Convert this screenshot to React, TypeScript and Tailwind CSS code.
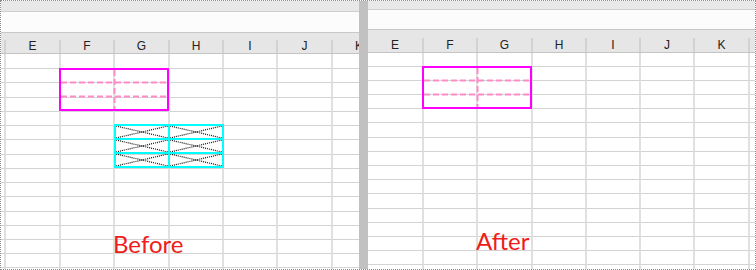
const LEFT_COLS = [
  { label: "", w: "w-[5px]" },
  { label: "E", w: "w-[55px]" },
  { label: "F", w: "w-[54px]" },
  { label: "G", w: "w-[55px]" },
  { label: "H", w: "w-[54px]" },
  { label: "I", w: "w-[54px]" },
  { label: "J", w: "w-[55px]" },
  { label: "K", w: "w-[54px]" },
];

const RIGHT_COLS = [
  { label: "E", w: "w-[56px]" },
  { label: "F", w: "w-[54px]" },
  { label: "G", w: "w-[55px]" },
  { label: "H", w: "w-[54px]" },
  { label: "I", w: "w-[54px]" },
  { label: "J", w: "w-[54px]" },
  { label: "K", w: "w-[55px]" },
  { label: "", w: "w-[54px]" },
];

// row heights incl. bottom grid line
const LEFT_ROWS = ["h-[15px]", "h-[14px]", "h-[15px]", "h-[14px]", "h-[14px]", "h-[14px]", "h-[15px]", "h-[14px]", "h-[14px]", "h-[14px]", "h-[15px]", "h-[14px]", "h-[14px]", "h-[14px]", "h-[14px]", "h-[14px]"];
const RIGHT_ROWS = ["h-[14px]", "h-[14px]", "h-[14px]", "h-[14px]", "h-[14px]", "h-[15px]", "h-[14px]", "h-[14px]", "h-[14px]", "h-[14px]", "h-[15px]", "h-[14px]", "h-[14px]", "h-[14px]", "h-[14px]", "h-[14px]"];

type Col = { label: string; w: string };

function Header({ cols, top, bottom }: { cols: Col[]; top: string; bottom: string }) {
  return (
    <div className="shrink-0 flex flex-col bg-[#e6e6e6] border-b border-[#c4c4c4]">
      <div className={top} />
      <div className={`flex ${bottom}`}>
        {cols.map((c, i) => (
          <div
            key={i}
            className={`${c.w} shrink-0 flex items-end justify-center pb-px border-r-2 border-[#d2d2d2] text-[12px] leading-none text-[#222]`}
          >
            {c.label}
          </div>
        ))}
      </div>
    </div>
  );
}

function Grid({ cols, rows }: { cols: Col[]; rows: string[] }) {
  return (
    <div className="flex flex-col">
      {rows.map((h, r) => (
        <div key={r} className={`flex shrink-0 ${h}`}>
          {cols.map((c, i) => (
            <div key={i} className={`${c.w} shrink-0 border-r-2 border-b border-r-[#e0e0e0] border-b-[#d3d3d3]`} />
          ))}
        </div>
      ))}
    </div>
  );
}

function DashedBox() {
  return (
    <svg width="110" height="43" viewBox="0 0 110 43">
      <g stroke="#ff8cc8" strokeWidth="2" strokeDasharray="6 3">
        <line x1="2" y1="14.5" x2="108" y2="14.5" />
        <line x1="2" y1="28.5" x2="108" y2="28.5" />
        <line x1="55.5" y1="2" x2="55.5" y2="41" />
      </g>
      <rect x="1" y="1" width="108" height="41" fill="none" stroke="#ff00ff" strokeWidth="2" />
    </svg>
  );
}

function CrossBox() {
  const cells = [
    [2, 2, 54, 14], [56, 2, 108, 14],
    [2, 16, 54, 28], [56, 16, 108, 28],
    [2, 30, 54, 42], [56, 30, 108, 42],
  ];
  return (
    <svg width="110" height="44" viewBox="0 0 110 44">
      <g stroke="#111" strokeWidth="1.2" strokeDasharray="1 1">
        {cells.map(([x1, y1, x2, y2], i) => (
          <g key={i}>
            <line x1={x1} y1={y1} x2={x2} y2={y2} />
            <line x1={x1} y1={y2} x2={x2} y2={y1} />
          </g>
        ))}
      </g>
      <g stroke="#00ffff" strokeWidth="2" fill="none">
        <rect x="1" y="1" width="108" height="42" />
        <line x1="55" y1="1" x2="55" y2="43" />
        <line x1="1" y1="15" x2="109" y2="15" />
        <line x1="1" y1="29" x2="109" y2="29" />
      </g>
    </svg>
  );
}

export default function App() {
  return (
    <div className="w-[756px] h-[270px] bg-white border border-dotted border-[#8a8a8a] flex font-['Liberation_Sans',Arial,sans-serif]">
      {/* before */}
      <div className="relative w-[358px] shrink-0 overflow-hidden flex flex-col bg-white">
        <div className="h-[11px] shrink-0 bg-[#e8e8e8] border-b border-[#cfcfcf]" />
        <div className="h-[21px] shrink-0 bg-[#fcfcfc] border-b border-[#c8c8c8]" />
        <Header cols={LEFT_COLS} top="h-[7px]" bottom="h-[13px]" />
        <Grid cols={LEFT_COLS} rows={LEFT_ROWS} />

        <div className="absolute left-[58px] top-[67px]">
          <DashedBox />
        </div>
        <div className="absolute left-[113px] top-[123px]">
          <CrossBox />
        </div>
        <div className="absolute left-[112px] top-[231px] text-[24px] leading-none text-[#f01c1c] font-['Lato',sans-serif]">
          Before
        </div>
      </div>

      <div className="w-[9px] shrink-0 bg-[#c1c1c1]" />

      {/* after */}
      <div className="relative flex-1 overflow-hidden flex flex-col bg-white">
        <div className="h-[9px] shrink-0 bg-[#e8e8e8] border-b border-[#cfcfcf]" />
        <div className="h-[20px] shrink-0 bg-[#fcfcfc] border-b border-[#c8c8c8]" />
        <Header cols={RIGHT_COLS} top="h-[8px]" bottom="h-[14px]" />
        <Grid cols={RIGHT_COLS} rows={RIGHT_ROWS} />

        <div className="absolute left-[54px] top-[65px]">
          <DashedBox />
        </div>
        <div className="absolute left-[108px] top-[228px] text-[24px] leading-none text-[#f01c1c] font-['Lato',sans-serif]">
          After
        </div>
      </div>
    </div>
  );
}
